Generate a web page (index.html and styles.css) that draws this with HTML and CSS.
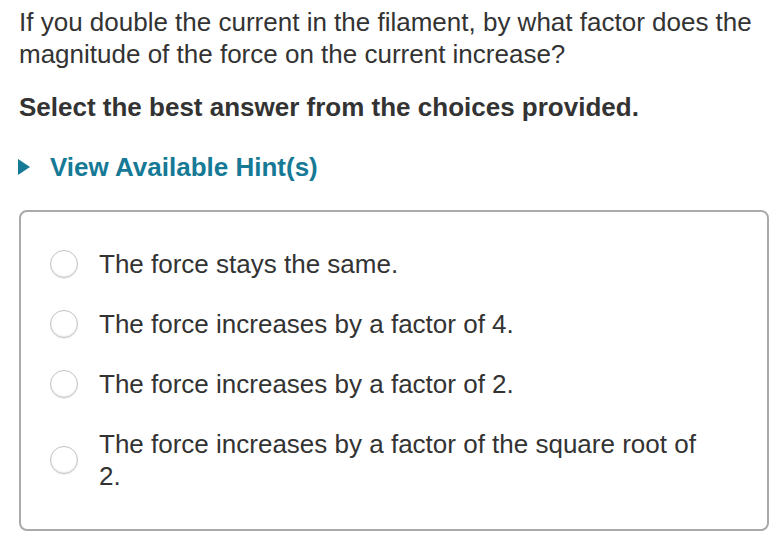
FILE: index.html
```html
<!DOCTYPE html>
<html>
<head>
<meta charset="utf-8">
<link rel="stylesheet" href="styles.css">
</head>
<body>
<div class="page">
  <p class="question">If you double the current in the filament, by what factor does the magnitude of the force on the current increase?</p>
  <p class="instruction">Select the best answer from the choices provided.</p>
  <div class="hint"><span class="tri"></span><span class="hint-text">View Available Hint(s)</span></div>
  <div class="choices">
    <div class="option"><span class="radio"></span><span class="label">The force stays the same.</span></div>
    <div class="option"><span class="radio"></span><span class="label">The force increases by a factor of 4.</span></div>
    <div class="option"><span class="radio"></span><span class="label">The force increases by a factor of 2.</span></div>
    <div class="option"><span class="radio"></span><span class="label">The force increases by a factor of the square root of 2.</span></div>
  </div>
</div>
</body>
</html>
```
FILE: styles.css
```css
html, body {
  margin: 0;
  padding: 0;
  background: #fff;
}
.page {
  padding: 6px 5px 0 19px;
  font-family: "Liberation Sans", Arial, sans-serif;
  font-size: 26px;
  line-height: 32px;
  color: #333;
}
.question {
  margin: 0;
  width: 745px;
}
.instruction {
  margin: 21px 0 0;
  font-weight: bold;
}
.hint {
  margin-top: 28px;
  display: flex;
  align-items: center;
  height: 32px;
}
.tri {
  width: 0;
  height: 0;
  border-top: 8px solid transparent;
  border-bottom: 8px solid transparent;
  border-left: 12px solid #167a96;
  margin-left: -1px;
  margin-right: 20px;
}
.hint-text {
  color: #167a96;
  font-weight: bold;
}
.choices {
  margin-top: 27px;
  width: 750px;
  box-sizing: border-box;
  border: 2px solid #aaa;
  border-radius: 8px;
  padding: 36px 40px 37px 29px;
  display: flex;
  flex-direction: column;
  gap: 28px;
}
.option {
  display: flex;
  align-items: center;
  gap: 21px;
}
.radio {
  flex: none;
  width: 28px;
  height: 28px;
  box-sizing: border-box;
  border-radius: 50%;
  border: 1px solid #c4c4c4;
  background: #fff;
  box-shadow: inset 0 -1px 2px rgba(0,0,0,0.08), 0 1px 1px rgba(0,0,0,0.06);
}
.label {
  max-width: 605px;
}
```
